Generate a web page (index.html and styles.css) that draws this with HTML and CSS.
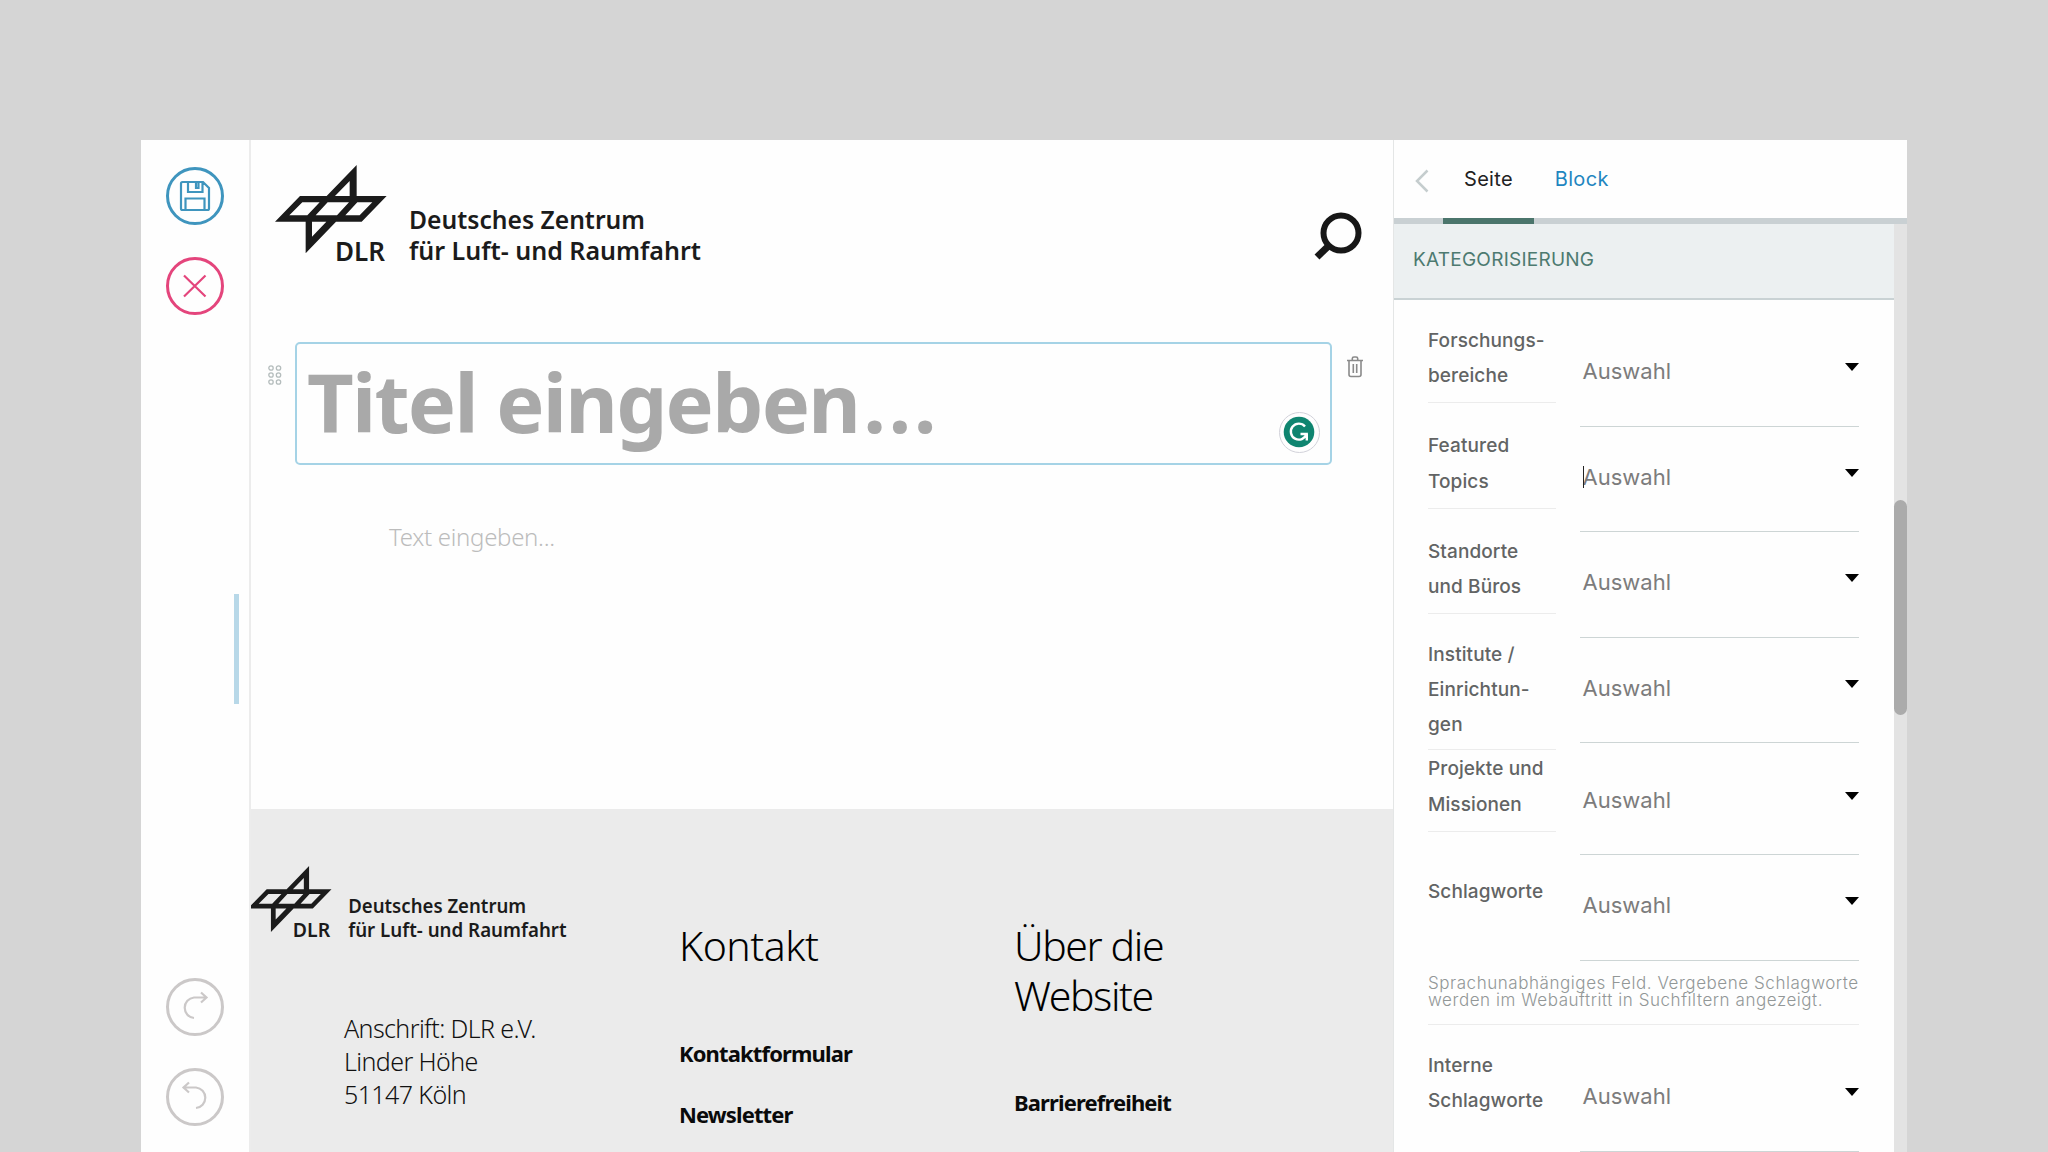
FILE: index.html
```html
<!DOCTYPE html>
<html lang="de">
<head>
  <meta charset="UTF-8" />
  <meta name="viewport" content="width=device-width, initial-scale=1.0" />
  <title>DLR Editor</title>
  <link rel="stylesheet" href="styles.css">
</head>
<body>

  <div class="app">
    <aside class="toolbar">
      <div class="group">
        <button class="round save" title="Speichern">
          <svg viewBox="0 0 58 58"><path d="M16.500 15H37L43 21V41.500Q43 43 41.500 43H16.500Q15 43 15 41.500V16.500Q15 15 16.500 15ZM22 15V25H36.500V15M19.500 43V31.500H38.500V43M30 16V21H32.500V16"/></svg>
        </button>
        <button class="round cancel" title="Abbrechen">
          <svg viewBox="0 0 58 58"><path d="M18 18.500 39.500 39.500M39.500 18.500 18 39.500"/></svg>
        </button>
      </div>
      <div class="group">
        <button class="round" title="Wiederholen">
          <svg viewBox="0 0 58 58"><path d="M28 40A10.300 10.300 0 0 1 28 19.500H40.500M35 14.500 40.500 19.500 35 24.500"/></svg>
        </button>
        <button class="round" title="Rückgängig">
          <svg viewBox="0 0 58 58"><path d="M30 40A10.300 10.300 0 0 0 30 19.500H17.500M23 14.500 17.500 19.500 23 24.500"/></svg>
        </button>
      </div>
      <div class="handle"></div>
    </aside>

    <main class="page">
      <header class="page-header">
        <svg class="logo" viewBox="0 0 430 100">
          <path transform="scale(.3333)" fill-rule="evenodd" d="M0 170 75 93H155L245 0V93H335L260 170H183L92 265V170ZM43 151H97L134 112H82ZM122 151H186L222 112H158ZM211 151H254L292 112H247ZM224 48 180 93H224ZM111 170V215L154 170Z"/>
          <text x="60" y="95.5" font-size="27" textLength="50" lengthAdjust="spacingAndGlyphs">DLR</text>
          <text x="134" y="63.5" font-size="26" textLength="236" lengthAdjust="spacingAndGlyphs">Deutsches Zentrum</text>
          <text x="134" y="95" font-size="26" textLength="292" lengthAdjust="spacingAndGlyphs">für Luft- und Raumfahrt</text>
        </svg>
        <svg class="search" viewBox="0 0 48 48"><circle cx="27" cy="21" r="17.500"/><path d="M15 33.500 3 45"/></svg>
      </header>

      <div class="title-row">
        <svg class="drag" viewBox="0 0 14 20"><circle cx="3" cy="3" r="2.200"/><circle cx="10.500" cy="3" r="2.200"/><circle cx="3" cy="10" r="2.200"/><circle cx="10.500" cy="10" r="2.200"/><circle cx="3" cy="17" r="2.200"/><circle cx="10.500" cy="17" r="2.200"/></svg>
        <div class="title-box">
          <h1>Titel eingeben<span class="dots">...</span></h1>
          <div class="grammar">
            <svg viewBox="0 0 40 40"><circle cx="20" cy="20" r="15.300" fill="#0f8570"/><path d="M26 14.500A8 8 0 1 0 27.500 22H21.500M27.800 22V28.500" /></svg>
          </div>
        </div>
        <svg class="trash" viewBox="0 0 18 22"><path d="M1 4.500H17M3 4.500V18.500Q3 20.500 5 20.500H13Q15 20.500 15 18.500V4.500M6.300 4V2.500Q6.300 1 8 1H10Q11.700 1 11.700 2.500V4M7.300 8V17M10.700 8V17"/></svg>
      </div>
      <p class="placeholder">Text eingeben...</p>

      <footer>
        <div class="col about">
          <svg class="logo small" viewBox="0 0 430 100">
            <path transform="scale(.3333)" fill-rule="evenodd" d="M0 170 75 93H155L245 0V93H335L260 170H183L92 265V170ZM43 151H97L134 112H82ZM122 151H186L222 112H158ZM211 151H254L292 112H247ZM224 48 180 93H224ZM111 170V215L154 170Z"/>
            <text x="60" y="95.5" font-size="27" textLength="50" lengthAdjust="spacingAndGlyphs">DLR</text>
            <text x="134" y="63.5" font-size="26" textLength="238" lengthAdjust="spacingAndGlyphs">Deutsches Zentrum</text>
            <text x="134" y="95" font-size="26" textLength="292" lengthAdjust="spacingAndGlyphs">für Luft- und Raumfahrt</text>
          </svg>
          <address>Anschrift: DLR e.V.<br>Linder Höhe<br>51147 Köln</address>
        </div>
        <div class="col">
          <h2>Kontakt</h2>
          <a>Kontaktformular</a>
          <a>Newsletter</a>
        </div>
        <div class="col">
          <h2 class="tight">Über die<br>Website</h2>
          <a>Barrierefreiheit</a>
        </div>
      </footer>
    </main>

    <aside class="settings">
      <nav class="tabs">
        <svg class="back" viewBox="0 0 14 24"><path d="M12.500 1.500 2 12 12.500 22.500"/></svg>
        <a class="tab active">Seite</a>
        <a class="tab">Block</a>
      </nav>
      <div class="scroll">
        <div class="fields">
          <h3>KATEGORISIERUNG</h3>
          <div class="field spaced">
            <label>Forschungs-<br>bereiche</label>
            <div class="select">Auswahl</div>
          </div>
          <div class="field">
            <label>Featured<br>Topics</label>
            <div class="select focus">Auswahl</div>
          </div>
          <div class="field">
            <label>Standorte<br>und Büros</label>
            <div class="select">Auswahl</div>
          </div>
          <div class="field">
            <label class="long">Institute /<br>Einrichtun-<br>gen</label>
            <div class="select">Auswahl</div>
          </div>
          <div class="field">
            <label>Projekte und<br>Missionen</label>
            <div class="select">Auswahl</div>
          </div>
          <div class="field">
            <label class="plain">Schlagworte</label>
            <div class="select">Auswahl</div>
          </div>
          <p class="help">Sprachunabhängiges Feld. Vergebene Schlagworte<br>werden im Webauftritt in Suchfiltern angezeigt.</p>
          <div class="field spaced">
            <label class="plain">Interne<br>Schlagworte</label>
            <div class="select">Auswahl</div>
          </div>
        </div>
        <div class="track"><div class="thumb"></div></div>
      </div>
    </aside>
  </div>

</body>
</html>
```

FILE: styles.css
```css
* {
  box-sizing: border-box;
}

html, body {
  margin: 0;
  height: 1152px;
  overflow: hidden;
  background: #d5d5d5;
  font-family: 'Noto Sans', 'Open Sans', sans-serif;
}

h1, h2, h3, p {
  margin: 0;
  font-weight: normal;
}

svg {
  display: block;
  fill: none;
  flex: none;
}

.app {
  display: flex;
  width: 1766px;
  height: 1012px;
  margin: 140px 0 0 141px;
  background: #fefefe;
}

/* left toolbar */
.toolbar {
  position: relative;
  display: flex;
  flex-direction: column;
  justify-content: space-between;
  width: 110px;
  padding: 27px 0 26.5px 25px;
  border-right: 2px solid #ececec;
}

.group {
  display: flex;
  flex-direction: column;
  gap: 32px;
}

.round {
  width: 58px;
  height: 58px;
  padding: 0;
  border: 3px solid #cbc8c8;
  border-radius: 50%;
  background: none;
  color: #cbc8c8;
}

.round svg {
  width: 58px;
  height: 58px;
  margin: -3px;
  stroke: currentColor;
  stroke-width: 2.2;
}

.save {
  color: #3f95be;
  border-color: #3f95be;
}

.cancel {
  color: #e4457c;
  border-color: #e4457c;
}

.handle {
  position: absolute;
  left: 92.5px;
  top: 454px;
  width: 5px;
  height: 110px;
  background: #b8d8e8;
}

/* page preview */
.page {
  display: flex;
  flex-direction: column;
  width: 1142px;
}

.page-header {
  display: flex;
  justify-content: space-between;
  height: 202px;
  padding: 25px 31px 0 24px;
}

.logo {
  width: 430px;
  height: 100px;
  fill: #1b1b1b;
  font-weight: 600;
}

.search {
  width: 48px;
  height: 48px;
  margin-top: 46.5px;
  stroke: #171717;
  stroke-width: 6;
}

.search path {
  stroke-width: 7;
}

.title-row {
  display: flex;
  align-items: flex-start;
  padding-left: 17px;
}

.drag {
  width: 14px;
  height: 20px;
  margin: 23px 13px 0 0;
  stroke: #b5bdbd;
  stroke-width: 1.3;
}

.title-box {
  position: relative;
  width: 1037px;
  height: 123px;
  padding-left: 10px;
  border: 2px solid #a5d3e6;
  border-radius: 5px;
}

h1 {
  font-size: 81px;
  font-weight: 700;
  line-height: 115px;
  letter-spacing: -1.75px;
  color: #a9a9a9;
}

.dots {
  margin-left: 4px;
  letter-spacing: 2.5px;
}

.grammar {
  position: absolute;
  right: 10px;
  bottom: 10px;
  width: 41px;
  height: 41px;
  border: 1.5px solid #d2d2da;
  border-radius: 50%;
}

.grammar svg {
  width: 40px;
  height: 40px;
  margin: -1px;
}

.grammar path {
  stroke: #fff;
  stroke-width: 2.4;
}

.trash {
  width: 18px;
  height: 22px;
  margin: 14px 0 0 14px;
  stroke: #8a8a8a;
  stroke-width: 1.6;
}

.placeholder {
  margin: 56px 0 0 138px;
  font-size: 24px;
  font-weight: 300;
  line-height: 32px;
  letter-spacing: -0.3px;
  color: #bcbcbc;
}

footer {
  display: flex;
  height: 343px;
  margin-top: auto;
  background: #ebebeb;
  overflow: hidden;
}

.col {
  display: flex;
  flex-direction: column;
  width: 335px;
  padding-top: 112px;
}

.about {
  width: 428px;
  padding-top: 56.5px;
}

.small {
  width: 321.6px;
  height: 74.8px;
  margin-left: -2.6px;
}

address {
  margin: 72px 0 0 93px;
  font-size: 25px;
  font-style: normal;
  font-weight: 300;
  line-height: 33px;
  letter-spacing: -0.6px;
  color: #111;
}

h2 {
  margin-bottom: 67px;
  font-size: 41px;
  font-weight: 300;
  line-height: 49.6px;
  letter-spacing: -0.5px;
  color: #000;
}

.tight {
  letter-spacing: -1.4px;
}

.col a {
  margin-bottom: 31.3px;
  font-size: 22px;
  font-weight: 700;
  line-height: 30px;
  letter-spacing: -0.87px;
  color: #0a0a0a;
}

/* right settings panel */
.settings {
  display: flex;
  flex-direction: column;
  width: 514px;
  border-left: 1px solid #e4e6e6;
  font-family: 'Inter', sans-serif;
}

.tabs {
  display: flex;
  height: 84px;
  border-bottom: 6px solid #c9d0d3;
}

.back {
  width: 14px;
  height: 24px;
  margin: 29px 14px 0 21px;
  stroke: #c5cdce;
  stroke-width: 2.5;
}

.tab {
  height: 84px;
  padding: 0 21px;
  font-size: 20px;
  line-height: 78px;
  letter-spacing: 0.3px;
  color: #1f86c0;
}

.active {
  border-bottom: 6px solid #4b756c;
  color: #222;
}

.scroll {
  display: flex;
  flex: 1;
}

.fields {
  flex: 1;
}

h3 {
  height: 76px;
  padding-left: 19px;
  border-bottom: 2px solid #c9d2d4;
  background: #ecf0f1;
  font-size: 19px;
  line-height: 72px;
  letter-spacing: 0.25px;
  color: #4d7a70;
}

.field {
  display: flex;
  align-items: flex-start;
  justify-content: space-between;
  padding: 0 35px 0 34px;
}

.spaced {
  padding-top: 21px;
}

label {
  display: flex;
  align-items: center;
  width: 128px;
  height: 82px;
  padding-bottom: 7px;
  border-bottom: 1px solid #ececec;
  font-size: 19px;
  font-weight: 500;
  line-height: 35.3px;
  letter-spacing: 0.1px;
  white-space: nowrap;
  color: #626464;
}

.long {
  height: 112px;
}

.plain {
  border-color: transparent;
}

.select {
  position: relative;
  width: 279.5px;
  height: 105.5px;
  padding-left: 3px;
  border-bottom: 1.5px solid #cdd5d5;
  font-size: 22px;
  line-height: 101px;
  color: #7c7c7c;
}

.select::after {
  content: "";
  position: absolute;
  right: 0;
  top: 42px;
  border: 7.5px solid transparent;
  border-top: 8px solid #000;
  border-bottom: 0;
}

.focus::before {
  content: "";
  position: absolute;
  left: 3px;
  top: 39px;
  width: 1px;
  height: 22px;
  background: #222;
}

.help {
  height: 64.5px;
  margin: 0 35px 0 34px;
  padding-top: 14px;
  border-bottom: 1px solid #ececec;
  font-size: 17px;
  font-weight: 300;
  line-height: 17.7px;
  letter-spacing: 0.55px;
  white-space: nowrap;
  color: #929797;
}

.track {
  width: 13px;
  background: #e3e3e3;
}

.thumb {
  height: 215px;
  margin-top: 276px;
  border-radius: 7px;
  background: #ababab;
}
```
